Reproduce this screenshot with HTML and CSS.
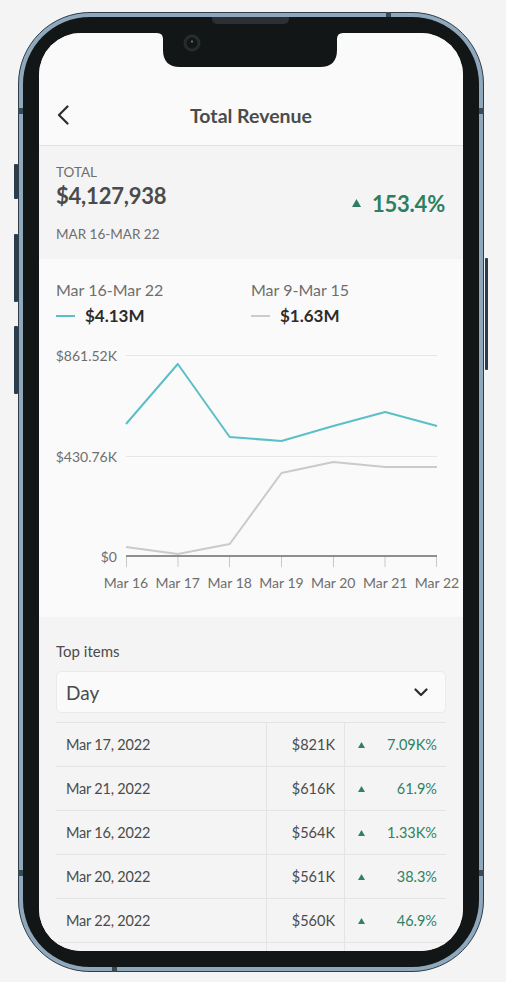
FILE: index.html
```html
<!DOCTYPE html>
<html lang="en">
<head>
<meta charset="utf-8">
<title>Total Revenue</title>
<link rel="stylesheet" href="styles.css">
</head>
<body>
<div class="phone">
  <span class="side-btn btn-l1"></span>
  <span class="side-btn btn-l2"></span>
  <span class="side-btn btn-l3"></span>
  <span class="side-btn btn-r1"></span>
  <span class="band band-top"></span>
  <span class="band band-bottom"></span>
  <span class="band band-left1"></span>
  <span class="band band-left2"></span>
  <span class="band band-right1"></span>
  <span class="band band-right2"></span>
  <div class="bezel">
    <span class="speaker"></span>
    <div class="screen">
      <svg class="notch" width="186" height="34" viewBox="0 0 186 34">
        <path d="M0 0 H186 Q180 0 180 6 V17 Q180 34 163 34 H23 Q6 34 6 17 V6 Q6 0 0 0 Z" fill="#121617"/>
        <circle cx="35" cy="10" r="8.5" fill="#272c2e"/>
        <circle cx="35" cy="10" r="5.5" fill="#121617"/>
        <circle cx="35" cy="8.5" r="0.9" fill="#8a9196"/>
      </svg>

      <header class="topbar">
        <svg class="back" width="12" height="20" viewBox="0 0 12 20">
          <path d="M10.5 1.5 L2 10 L10.5 18.5" fill="none" stroke="#2c2c2c" stroke-width="2.2" stroke-linecap="round" stroke-linejoin="round"/>
        </svg>
        <h1 class="title">Total Revenue</h1>
        <span></span>
      </header>

      <section class="total">
        <div class="total-left">
          <div class="caps">TOTAL</div>
          <div class="amount">$4,127,938</div>
          <div class="caps range">MAR 16-MAR 22</div>
        </div>
        <div class="change">
          <svg class="tri-lg" width="9" height="8" viewBox="0 0 9 8"><path d="M4.5 0 L9 8 H0 Z" fill="#2e7f5f"/></svg>
          <span>153.4%</span>
        </div>
      </section>

      <section class="chart">
        <div class="legend">
          <div class="legend-item">
            <div class="legend-range">Mar 16-Mar 22</div>
            <div class="legend-val"><span class="swatch swatch-teal"></span>$4.13M</div>
          </div>
          <div class="legend-item">
            <div class="legend-range">Mar 9-Mar 15</div>
            <div class="legend-val"><span class="swatch swatch-grey"></span>$1.63M</div>
          </div>
        </div>
        <svg class="plot" width="424" height="260" viewBox="0 0 424 260">
          <g class="grid">
            <line x1="87" y1="15.5" x2="398" y2="15.5"/>
            <line x1="87" y1="116.5" x2="398" y2="116.5"/>
          </g>
          <g class="ticks">
            <line x1="87.5" y1="216" x2="87.5" y2="227"/>
            <line x1="139" y1="216" x2="139" y2="227"/>
            <line x1="190.5" y1="216" x2="190.5" y2="227"/>
            <line x1="242.5" y1="216" x2="242.5" y2="227"/>
            <line x1="294.5" y1="216" x2="294.5" y2="227"/>
            <line x1="346" y1="216" x2="346" y2="227"/>
            <line x1="397.5" y1="216" x2="397.5" y2="227"/>
          </g>
          <polyline class="line-grey" points="87,207 138.8,214 190.7,204 242.5,133 294.3,122 346.2,127 398,127"/>
          <polyline class="line-teal" points="87,84 138.8,24 190.7,97 242.5,101 294.3,86 346.2,72 398,86"/>
          <line class="baseline" x1="87" y1="216" x2="398" y2="216"/>
          <g class="ylab">
            <text x="78" y="21">$861.52K</text>
            <text x="78" y="122">$430.76K</text>
            <text x="78" y="222">$0</text>
          </g>
          <g class="xlab">
            <text x="87" y="247.5">Mar 16</text>
            <text x="138.8" y="247.5">Mar 17</text>
            <text x="190.7" y="247.5">Mar 18</text>
            <text x="242.5" y="247.5">Mar 19</text>
            <text x="294.3" y="247.5">Mar 20</text>
            <text x="346.2" y="247.5">Mar 21</text>
            <text x="398" y="247.5">Mar 22</text>
          </g>
        </svg>
      </section>

      <section class="items">
        <div class="items-title">Top items</div>
        <div class="select">
          <span>Day</span>
          <svg class="chev" width="14" height="9" viewBox="0 0 14 9"><path d="M1.5 1.5 L7 7 L12.5 1.5" fill="none" stroke="#2c2c2c" stroke-width="2.2" stroke-linecap="round" stroke-linejoin="round"/></svg>
        </div>
        <table class="tbl">
          <tr><td class="c-date">Mar 17, 2022</td><td class="c-val">$821K</td><td class="c-pct"><div class="pct"><svg class="tri-sm" width="7" height="6" viewBox="0 0 7 6"><path d="M3.5 0 L7 6 H0 Z"/></svg><span>7.09K%</span></div></td></tr>
          <tr><td class="c-date">Mar 21, 2022</td><td class="c-val">$616K</td><td class="c-pct"><div class="pct"><svg class="tri-sm" width="7" height="6" viewBox="0 0 7 6"><path d="M3.5 0 L7 6 H0 Z"/></svg><span>61.9%</span></div></td></tr>
          <tr><td class="c-date">Mar 16, 2022</td><td class="c-val">$564K</td><td class="c-pct"><div class="pct"><svg class="tri-sm" width="7" height="6" viewBox="0 0 7 6"><path d="M3.5 0 L7 6 H0 Z"/></svg><span>1.33K%</span></div></td></tr>
          <tr><td class="c-date">Mar 20, 2022</td><td class="c-val">$561K</td><td class="c-pct"><div class="pct"><svg class="tri-sm" width="7" height="6" viewBox="0 0 7 6"><path d="M3.5 0 L7 6 H0 Z"/></svg><span>38.3%</span></div></td></tr>
          <tr><td class="c-date">Mar 22, 2022</td><td class="c-val">$560K</td><td class="c-pct"><div class="pct"><svg class="tri-sm" width="7" height="6" viewBox="0 0 7 6"><path d="M3.5 0 L7 6 H0 Z"/></svg><span>46.9%</span></div></td></tr>
          <tr><td class="c-date"></td><td class="c-val"></td><td class="c-pct"></td></tr>
        </table>
      </section>
    </div>
  </div>
</div>
</body>
</html>
```

FILE: styles.css
```css
html, body {
  margin: 0;
  padding: 0;
}
body {
  background: #f4f4f4;
  font-family: Lato, "Open Sans", sans-serif;
  color: #4b4b4b;
  width: 506px;
  height: 982px;
  overflow: hidden;
}

/* ---------- phone frame ---------- */
.phone {
  position: relative;
  width: 466px;
  height: 960px;
  box-sizing: border-box;
  margin: 12px 0 0 18px;
  border: 1px solid #2e3d49;
  border-radius: 72px;
  background: #8fa8bb;
  padding: 4px;
}
.side-btn {
  position: absolute;
  width: 4px;
  background: #2b3d4c;
  border-radius: 1px;
}
.btn-l1 { left: -5px; top: 151px; height: 35px; }
.btn-l2 { left: -5px; top: 221px; height: 68px; }
.btn-l3 { left: -5px; top: 313px; height: 68px; }
.btn-r1 { left: 466px; top: 245px; height: 112px; width: 3px; }

.band {
  position: absolute;
  background: #3a4954;
}
.band-top { top: -1px; left: 367px; width: 5px; height: 5px; }
.band-bottom { bottom: -1px; left: 93px; width: 5px; height: 5px; }
.band-left1 { left: -1px; top: 95px; width: 5px; height: 6px; }
.band-left2 { left: -1px; top: 857px; width: 5px; height: 6px; }
.band-right1 { right: -1px; top: 95px; width: 5px; height: 6px; }
.band-right2 { right: -1px; top: 857px; width: 5px; height: 6px; }

.bezel {
  position: relative;
  height: 100%;
  box-sizing: border-box;
  background: #121617;
  border-radius: 67px;
  padding: 16px;
}
.speaker {
  position: absolute;
  left: 189px;
  top: 0;
  width: 77px;
  height: 7px;
  background: #2a3033;
  border-radius: 0 0 5px 5px;
}
.screen {
  position: relative;
  height: 100%;
  border-radius: 42px;
  overflow: hidden;
  background: #f4f4f4;
}
.notch {
  position: absolute;
  left: 118px;
  top: 0;
  z-index: 2;
}

/* ---------- header ---------- */
.topbar {
  height: 113px;
  box-sizing: border-box;
  padding: 54px 18px 0 18px;
  background: #fafafa;
  border-bottom: 1px solid #e2e2e2;
  box-shadow: 0 1px 1px rgba(0, 0, 0, 0.03);
  display: grid;
  grid-template-columns: 1fr auto 1fr;
  align-items: center;
}
.back {
  display: block;
  margin-top: -3px;
}
.title {
  margin: 0;
  font-size: 19.5px;
  font-weight: 700;
  line-height: 24px;
  color: #4b4b4b;
}

/* ---------- total ---------- */
.total {
  height: 113px;
  box-sizing: border-box;
  padding: 0 18px 0 17px;
  display: flex;
  justify-content: space-between;
  align-items: center;
  background: #f4f4f4;
}
.caps {
  font-size: 13.5px;
  line-height: 16px;
  color: #6e6e6e;
}
.amount {
  margin-top: 2px;
  font-size: 22px;
  line-height: 28px;
  font-weight: 700;
  color: #4b4b4b;
  letter-spacing: -0.2px;
}
.range {
  margin-top: 16px;
}
.change {
  display: flex;
  align-items: center;
  gap: 11px;
  font-size: 22px;
  font-weight: 700;
  color: #2e7f5f;
  letter-spacing: -0.2px;
  margin-top: 1px;
}
.tri-lg {
  display: block;
}

/* ---------- chart ---------- */
.chart {
  background: #fafafa;
  padding: 21px 0 17px 0;
}
.legend {
  display: grid;
  grid-template-columns: 1fr 1fr;
  padding: 0 17px;
}
.legend-range {
  font-size: 16px;
  line-height: 20px;
  color: #6e6e6e;
}
.legend-val {
  margin-top: 5px;
  display: flex;
  align-items: center;
  gap: 10px;
  font-size: 17px;
  line-height: 22px;
  font-weight: 700;
  color: #2c2c2c;
}
.swatch {
  width: 19px;
  height: 2px;
  display: block;
}
.swatch-teal { background: #5bbfc7; }
.swatch-grey { background: #cbcbcb; }

.plot {
  display: block;
  margin-top: 13px;
  font-family: Lato, "Open Sans", sans-serif;
}
.grid line {
  stroke: #e6e6e6;
  stroke-width: 1;
}
.ticks line {
  stroke: #c9c9c9;
  stroke-width: 1;
}
.baseline {
  stroke: #8e8e8e;
  stroke-width: 2;
}
.line-teal {
  fill: none;
  stroke: #5bbfc7;
  stroke-width: 2;
  stroke-linejoin: round;
}
.line-grey {
  fill: none;
  stroke: #cacaca;
  stroke-width: 2;
  stroke-linejoin: round;
}
.ylab text {
  font-size: 14px;
  fill: #6e6e6e;
  text-anchor: end;
}
.xlab text {
  font-size: 14px;
  fill: #6e6e6e;
  text-anchor: middle;
}

/* ---------- top items ---------- */
.items {
  background: #f4f4f4;
  padding: 24px 17px 0 17px;
}
.items-title {
  font-size: 15px;
  line-height: 20px;
  color: #4b4b4b;
}
.select {
  margin-top: 10px;
  height: 42px;
  box-sizing: border-box;
  background: #fafafa;
  border: 1px solid #ebebeb;
  border-radius: 5px;
  padding: 0 17px 0 9px;
  display: flex;
  align-items: center;
  justify-content: space-between;
  font-size: 19px;
  color: #4b4b4b;
}
.chev {
  display: block;
}
.tbl {
  margin-top: 9px;
  width: 100%;
  border-collapse: collapse;
  border-top: 1px solid #e4e4e4;
  font-size: 14.5px;
  color: #4b4b4b;
}
.tbl td {
  height: 43px;
  padding: 0;
  border-bottom: 1px solid #e4e4e4;
}
.c-date {
  width: 200px;
  padding-left: 10px !important;
  letter-spacing: -0.2px;
}
.c-val {
  width: 68px;
  text-align: right;
  padding-right: 9px !important;
  border-left: 1px solid #e4e4e4;
}
.c-pct {
  border-left: 1px solid #e4e4e4;
  padding: 0 9px 0 13px !important;
}
.pct {
  display: flex;
  align-items: center;
  justify-content: space-between;
  color: #2e8263;
}
.tri-sm {
  display: block;
  fill: #2e8263;
}
```
